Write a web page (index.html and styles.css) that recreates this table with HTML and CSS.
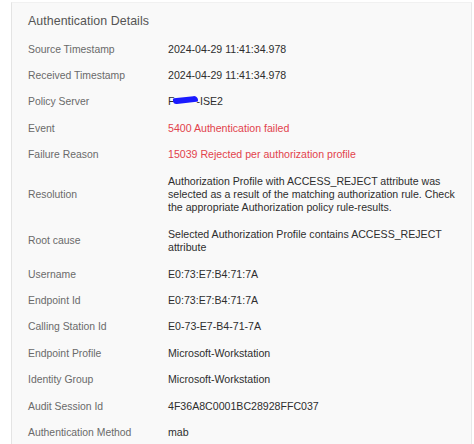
FILE: index.html
```html
<!DOCTYPE html>
<html>
<head>
<meta charset="utf-8">
<link rel="stylesheet" href="styles.css">
</head>
<body>
<section class="panel">
  <h2 class="title">Authentication Details</h2>
  <dl class="details">
    <div class="row"><dt>Source Timestamp</dt><dd>2024-04-29 11:41:34.978</dd></div>
    <div class="row"><dt>Received Timestamp</dt><dd>2024-04-29 11:41:34.978</dd></div>
    <div class="row"><dt>Policy Server</dt><dd><span class="redact">F</span><span class="scribble"></span>-ISE2</dd></div>
    <div class="row"><dt>Event</dt><dd class="err">5400 Authentication failed</dd></div>
    <div class="row"><dt>Failure Reason</dt><dd class="err">15039 Rejected per authorization profile</dd></div>
    <div class="row"><dt>Resolution</dt><dd>Authorization Profile with ACCESS_REJECT attribute was selected as a result of the matching authorization rule. Check the appropriate Authorization policy rule-results.</dd></div>
    <div class="row"><dt>Root cause</dt><dd>Selected Authorization Profile contains ACCESS_REJECT attribute</dd></div>
    <div class="row"><dt>Username</dt><dd>E0:73:E7:B4:71:7A</dd></div>
    <div class="row"><dt>Endpoint Id</dt><dd>E0:73:E7:B4:71:7A</dd></div>
    <div class="row"><dt>Calling Station Id</dt><dd>E0-73-E7-B4-71-7A</dd></div>
    <div class="row"><dt>Endpoint Profile</dt><dd>Microsoft-Workstation</dd></div>
    <div class="row"><dt>Identity Group</dt><dd>Microsoft-Workstation</dd></div>
    <div class="row"><dt>Audit Session Id</dt><dd>4F36A8C0001BC28928FFC037</dd></div>
    <div class="row"><dt>Authentication Method</dt><dd>mab</dd></div>
  </dl>
</section>
</body>
</html>
```
FILE: styles.css
```css
html, body {
  margin: 0;
  padding: 0;
  background: #ffffff;
}
body {
  font-family: "Liberation Sans", Arial, sans-serif;
  padding: 2px 2px 0 11px;
  height: 444px;
  box-sizing: border-box;
  overflow: hidden;
}
.panel {
  background: #f9f9f9;
  border-left: 1px solid #e4e4e4;
  border-right: 1px solid #e8e8e8;
  border-top: 1px solid #f1f1f1;
  padding: 10px 16px 0 16px;
  height: 460px;
  box-sizing: border-box;
}
.title {
  margin: 0 0 7px 0;
  font-size: 12.4px;
  font-weight: normal;
  color: #555555;
  line-height: 16px;
  letter-spacing: 0.05px;
}
.details {
  margin: 0;
  padding: 0;
}
.row {
  display: grid;
  grid-template-columns: 140px 288px;
  align-items: center;
  padding: 6.5px 0;
  font-size: 10.4px;
  line-height: 13.4px;
}
dt {
  color: #6a6a6a;
}
dd {
  margin: 0;
  color: #2e2e2e;
  font-size: 10.6px;
}
dd.err {
  color: #e2434c;
}
.redact {
  color: #2e2e2e;
}
.scribble {
  display: inline-block;
  width: 25px;
  height: 6px;
  background: #1a1aff;
  border-radius: 2px 7px 3px 6px;
  transform: rotate(-6deg);
  margin: 0 -2px 0 -1px;
  vertical-align: 2px;
}
```
